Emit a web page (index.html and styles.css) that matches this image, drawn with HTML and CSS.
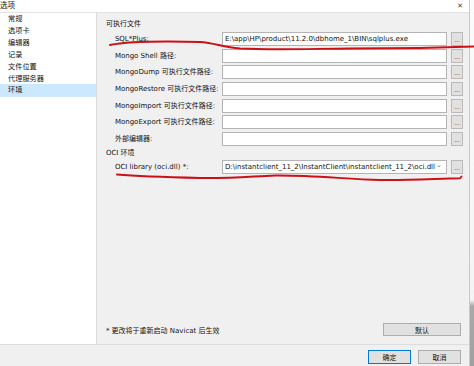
FILE: index.html
```html
<!DOCTYPE html>
<html lang="zh-CN">
<head>
<meta charset="utf-8">
<title>选项</title>
<link rel="stylesheet" href="styles.css">
</head>
<body>
<div class="page">
  <div class="window">
    <div class="titlebar">
      <span class="title">选项</span>
      <span class="close">✕</span>
    </div>
    <div class="body">
      <ul class="sidebar">
        <li>常规</li>
        <li>选项卡</li>
        <li>编辑器</li>
        <li>记录</li>
        <li>文件位置</li>
        <li>代理服务器</li>
        <li class="selected">环境</li>
      </ul>
      <div class="main">
        <div class="section-title">可执行文件</div>
        <div class="rows">
          <div class="row"><span class="label">SQL*Plus:</span><span class="input">E:\app\HP\product\11.2.0\dbhome_1\BIN\sqlplus.exe</span><span class="dots">...</span></div>
          <div class="row"><span class="label">Mongo Shell 路径:</span><span class="input"></span><span class="dots">...</span></div>
          <div class="row"><span class="label">MongoDump 可执行文件路径:</span><span class="input"></span><span class="dots">...</span></div>
          <div class="row"><span class="label">MongoRestore 可执行文件路径:</span><span class="input"></span><span class="dots">...</span></div>
          <div class="row"><span class="label">MongoImport 可执行文件路径:</span><span class="input"></span><span class="dots">...</span></div>
          <div class="row"><span class="label">MongoExport 可执行文件路径:</span><span class="input"></span><span class="dots">...</span></div>
          <div class="row"><span class="label">外部编辑器:</span><span class="input"></span><span class="dots">...</span></div>
        </div>
        <div class="section-title oci-title">OCI 环境</div>
        <div class="row oci-row"><span class="label">OCI library (oci.dll) *:</span><span class="input combo"><span class="combo-text">D:\instantclient_11_2\InstantClient\instantclient_11_2\oci.dll</span><span class="arrow">⌄</span></span><span class="dots">...</span></div>
        <div class="spacer"></div>
        <div class="footer-note">
          <span class="note">* 更改将于重新启动 Navicat 后生效</span>
          <span class="btn default-btn">默认</span>
        </div>
      </div>
    </div>
    <div class="bottombar">
      <span class="btn primary">确定</span>
      <span class="btn">取消</span>
    </div>
  </div>
  <div class="edge"></div>
</div>
<svg class="scribble" width="474" height="366" viewBox="0 0 474 366">
  <path d="M110,45 C125,42 160,41 200,42 C215,43 222,47 240,48.5 C270,50 300,49 350,48.5 L420,48 C445,47.5 460,47 474,46.5" />
  <path d="M117,174.5 C135,176 160,177 200,178 C235,178.5 255,176 275,175.5 C310,175 345,179 380,180 C410,180.5 440,178.5 460,178.3 L461.5,176.5" />
</svg>
</body>
</html>
```

FILE: styles.css
```css
* { box-sizing: border-box; }
html, body { margin: 0; padding: 0; }
body {
  width: 474px;
  height: 366px;
  overflow: hidden;
  background: #ffffff;
  font-family: "DejaVu Sans", "Noto Sans CJK SC", sans-serif;
  font-size: 7px;
  color: #111111;
  position: relative;
}
.page {
  display: flex;
  height: 366px;
}
.window {
  width: 470px;
  height: 366px;
  display: flex;
  flex-direction: column;
  border-right: 1px solid #c9c9c9;
}
.edge {
  width: 4px;
  height: 366px;
  background: linear-gradient(#fbfbfb 0, #f4f4f4 300px, #a9a9a9 306px, #a0a0a0 366px);
}
.titlebar {
  height: 13px;
  background: #ffffff;
  border-bottom: 1px solid #e3e3e3;
  display: flex;
  align-items: center;
  justify-content: space-between;
  padding-right: 6px;
}
.title {
  margin-left: 0;
  line-height: 12px;
  font-size: 7.5px;
}
.close {
  font-size: 7px;
  color: #444;
  line-height: 10px;
}
.body {
  flex: 1;
  display: flex;
  min-height: 0;
}
.sidebar {
  list-style: none;
  margin: 0;
  padding: 0;
  width: 97px;
  background: #ffffff;
  border-right: 1px solid #dadada;
  font-size: 7.2px;
}
.sidebar li {
  height: 12px;
  line-height: 12px;
  padding-left: 8px;
  white-space: nowrap;
}
.sidebar li.selected {
  background: #cce8ff;
  margin-top: -1px;
  height: 13px;
}
.main {
  flex: 1;
  background: #f0f0f0;
  display: flex;
  flex-direction: column;
  padding: 5px 6px 8px 9px;
}
.section-title {
  height: 12px;
  line-height: 12px;
}
.rows {
  margin-top: 2px;
  display: flex;
  flex-direction: column;
  gap: 2.67px;
}
.row {
  display: flex;
  align-items: center;
  height: 14px;
  padding-left: 9px;
}
.label {
  width: 107px;
  flex: none;
  white-space: nowrap;
  overflow: hidden;
  line-height: 14px;
}
.input {
  flex: 1;
  height: 14px;
  background: #ffffff;
  border: 1px solid #b4b4b4;
  padding-left: 2px;
  line-height: 12px;
  white-space: nowrap;
  overflow: hidden;
  color: #111;
}
.dots {
  flex: none;
  width: 12px;
  height: 14px;
  margin-left: 4px;
  background: #e1e1e1;
  border: 1px solid #b9b9b9;
  font-size: 6px;
  line-height: 14px;
  text-align: center;
  color: #333;
}
.oci-title { margin-top: 1px; }
.oci-row { margin-top: 1px; }
.combo {
  display: flex;
  align-items: center;
  padding-right: 3px;
}
.combo-text {
  flex: 1;
  overflow: hidden;
  white-space: nowrap;
}
.arrow {
  flex: none;
  width: 8px;
  text-align: center;
  color: #777;
  font-size: 7px;
  line-height: 8px;
  margin-top: -4px;
}
.spacer { flex: 1; }
.footer-note {
  display: flex;
  align-items: center;
  justify-content: space-between;
  padding-right: 2px;
}
.btn {
  display: inline-flex;
  align-items: center;
  justify-content: center;
  height: 13px;
  background: #e1e1e1;
  border: 1px solid #adadad;
  color: #111;
}
.default-btn { width: 78px; }
.bottombar {
  height: 22px;
  background: #f0f0f0;
  border-top: 1px solid #dcdcdc;
  display: flex;
  justify-content: flex-end;
  align-items: flex-start;
  gap: 7px;
  padding: 5px 8px 0 0;
}
.bottombar .btn { width: 43px; height: 13.5px; }
.bottombar .primary {
  border: 1px solid #0078d7;
  box-shadow: inset 0 0 0 1px #e1e1e1;
}
.scribble {
  position: absolute;
  left: 0;
  top: 0;
  pointer-events: none;
}
.scribble path {
  fill: none;
  stroke: #cc1018;
  stroke-width: 1.9;
  stroke-linecap: round;
}
```
